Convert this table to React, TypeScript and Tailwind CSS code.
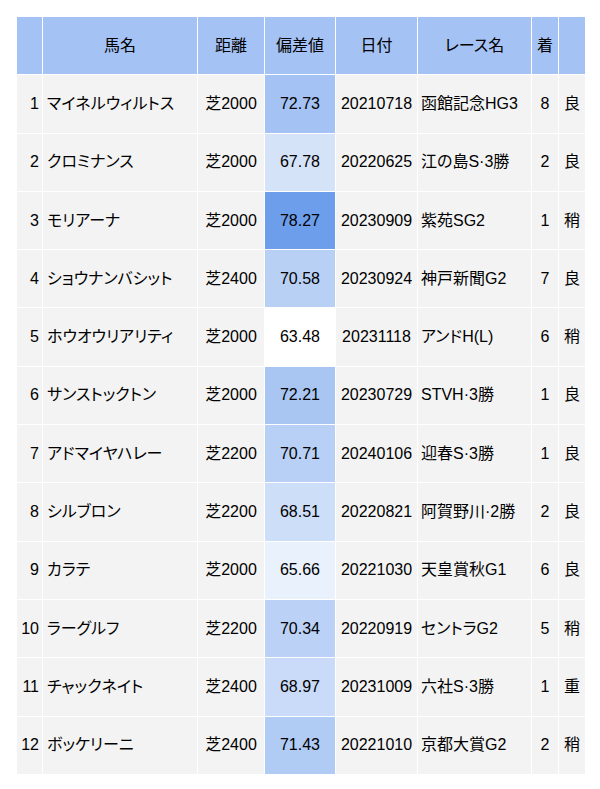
import React from 'react';

const rows = [
  { no: 1, name: 'マイネルウィルトス', dist: '芝2000', score: '72.73', bg: 'bg-[#a4c2f3]', date: '20210718', race: '函館記念HG3', rank: 8, cond: '良' },
  { no: 2, name: 'クロミナンス', dist: '芝2000', score: '67.78', bg: 'bg-[#d5e3f9]', date: '20220625', race: '江の島S·3勝', rank: 2, cond: '良' },
  { no: 3, name: 'モリアーナ', dist: '芝2000', score: '78.27', bg: 'bg-[#6d9eeb]', date: '20230909', race: '紫苑SG2', rank: 1, cond: '稍' },
  { no: 4, name: 'ショウナンバシット', dist: '芝2400', score: '70.58', bg: 'bg-[#b9d0f5]', date: '20230924', race: '神戸新聞G2', rank: 7, cond: '良' },
  { no: 5, name: 'ホウオウリアリティ', dist: '芝2000', score: '63.48', bg: 'bg-white', date: '20231118', race: 'アンドH(L)', rank: 6, cond: '稍' },
  { no: 6, name: 'サンストックトン', dist: '芝2000', score: '72.21', bg: 'bg-[#a9c6f3]', date: '20230729', race: 'STVH·3勝', rank: 1, cond: '良' },
  { no: 7, name: 'アドマイヤハレー', dist: '芝2200', score: '70.71', bg: 'bg-[#b8d0f5]', date: '20240106', race: '迎春S·3勝', rank: 1, cond: '良' },
  { no: 8, name: 'シルブロン', dist: '芝2200', score: '68.51', bg: 'bg-[#cddef8]', date: '20220821', race: '阿賀野川·2勝', rank: 2, cond: '良' },
  { no: 9, name: 'カラテ', dist: '芝2000', score: '65.66', bg: 'bg-[#e9f1fc]', date: '20221030', race: '天皇賞秋G1', rank: 6, cond: '良' },
  { no: 10, name: 'ラーグルフ', dist: '芝2200', score: '70.34', bg: 'bg-[#bbd2f6]', date: '20220919', race: 'セントラG2', rank: 5, cond: '稍' },
  { no: 11, name: 'チャックネイト', dist: '芝2400', score: '68.97', bg: 'bg-[#c9dbf8]', date: '20231009', race: '六社S·3勝', rank: 1, cond: '重' },
  { no: 12, name: 'ボッケリーニ', dist: '芝2400', score: '71.43', bg: 'bg-[#b0cbf4]', date: '20221010', race: '京都大賞G2', rank: 2, cond: '稍' },
];

const App = () => {
  return (
    <div className="min-h-[789px] bg-white p-4 font-['Liberation_Sans','Noto_Sans_CJK_JP',sans-serif] text-[16px] text-black [font-feature-settings:'palt']">
      <table className="w-[570px] table-fixed border-separate border-spacing-[1px]">
        <thead>
          {/* header row */}
          <tr className="bg-[#a4c2f4]">
            <th className="h-[57.3px] w-[25px] font-normal"></th>
            <th className="w-[154px] text-center font-normal">馬名</th>
            <th className="w-[66px] text-center font-normal">距離</th>
            <th className="w-[70px] text-center font-normal">偏差値</th>
            <th className="w-[81px] text-center font-normal">日付</th>
            <th className="w-[113px] text-center font-normal">レース名</th>
            <th className="w-[26px] text-center font-normal">着</th>
            <th className="w-[26px] font-normal"></th>
          </tr>
        </thead>
        <tbody>
          {rows.map((r) => (
            <tr key={r.no} className="bg-[#f3f3f3]">
              <td className="h-[57.3px] whitespace-nowrap pr-[3px] text-right">{r.no}</td>
              <td className="whitespace-nowrap pl-[4px] text-left">{r.name}</td>
              <td className="whitespace-nowrap text-center">{r.dist}</td>
              <td className={`whitespace-nowrap text-center ${r.bg}`}>{r.score}</td>
              <td className="whitespace-nowrap text-center">{r.date}</td>
              <td className="whitespace-nowrap pl-[3px] text-left">{r.race}</td>
              <td className="whitespace-nowrap text-center">{r.rank}</td>
              <td className="whitespace-nowrap text-center">{r.cond}</td>
            </tr>
          ))}
        </tbody>
      </table>
    </div>
  );
};

export default App;
